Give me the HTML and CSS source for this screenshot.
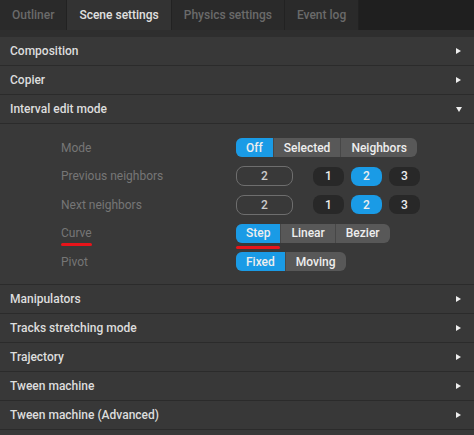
FILE: index.html
```html
<!DOCTYPE html>
<html lang="en">
<head>
    <meta charset="UTF-8">
    <meta name="viewport" content="width=device-width, initial-scale=1.0">
    <title>Scene settings</title>
    <link rel="stylesheet" href="styles.css">
</head>
<body>
    <div class="tabs">
        <div class="tab">Outliner</div>
        <div class="tab active">Scene settings</div>
        <div class="tab">Physics settings</div>
        <div class="tab">Event log</div>
    </div>
    <div class="strip"></div>

    <div class="section"><span>Composition</span><i class="arrow"></i></div>
    <div class="section"><span>Copier</span><i class="arrow"></i></div>
    <div class="section"><span>Interval edit mode</span><i class="arrow open"></i></div>

    <div class="panel">
        <div class="label">Mode</div>
        <div class="seg">
            <span class="on">Off</span><span>Selected</span><span>Neighbors</span>
        </div>

        <div class="label">Previous neighbors</div>
        <div class="numrow">
            <span class="num">2</span>
            <span class="pill">1</span><span class="pill on">2</span><span class="pill">3</span>
        </div>

        <div class="label">Next neighbors</div>
        <div class="numrow">
            <span class="num">2</span>
            <span class="pill">1</span><span class="pill on">2</span><span class="pill">3</span>
        </div>

        <div class="label marked">Curve</div>
        <div class="seg">
            <span class="on marked">Step</span><span>Linear</span><span>Bezier</span>
        </div>

        <div class="label">Pivot</div>
        <div class="seg">
            <span class="on">Fixed</span><span>Moving</span>
        </div>
    </div>

    <div class="section"><span>Manipulators</span><i class="arrow"></i></div>
    <div class="section"><span>Tracks stretching mode</span><i class="arrow"></i></div>
    <div class="section"><span>Trajectory</span><i class="arrow"></i></div>
    <div class="section"><span>Tween machine</span><i class="arrow"></i></div>
    <div class="section"><span>Tween machine (Advanced)</span><i class="arrow"></i></div>
</body>
</html>
```

FILE: styles.css
```css
body {
    margin: 0;
    background-color: #383838;
    font-family: Roboto, "Liberation Sans", sans-serif;
    font-size: 12px;
    color: #ddd;
}
.tabs {
    display: flex;
    height: 30px;
    background: #1f1f1f;
}
.tab {
    display: flex;
    align-items: center;
    padding: 0 12px;
    background: #2a2a2a;
    color: #6a6a6a;
    font-weight: 500;
    border-right: 1px solid #222;
}
.tab.active {
    background: #333;
    color: #e0e0e0;
}
.strip {
    height: 7px;
    background: #2e2e2e;
}
.section {
    display: flex;
    align-items: center;
    justify-content: space-between;
    height: 28px;
    padding: 0 12px 0 10px;
    border-bottom: 1px solid #2b2b2b;
    font-weight: 500;
}
.arrow {
    width: 0;
    height: 0;
    border-top: 3px solid transparent;
    border-bottom: 3px solid transparent;
    border-left: 5px solid #eee;
    margin-right: 1px;
}
.arrow.open {
    border-left: 3px solid transparent;
    border-right: 3px solid transparent;
    border-top: 5px solid #eee;
    border-bottom: 0;
    margin-right: 0;
}
.panel {
    display: grid;
    grid-template-columns: 175px auto;
    grid-auto-rows: 28.5px;
    align-items: center;
    padding: 9.5px 0 8px 61px;
    border-bottom: 1px solid #2b2b2b;
    background: #393939;
}
.label {
    color: #767676;
    position: relative;
}
.marked::after {
    content: "";
    position: absolute;
    left: 0;
    right: 0;
    bottom: -6px;
    height: 3px;
    border-radius: 2px;
    background: #e8141a;
}
.label.marked::after {
    right: auto;
    width: 31px;
}
.seg {
    display: flex;
    justify-self: start;
    height: 19px;
    border-radius: 6px;
    background: #585858;
    font-weight: 500;
    color: #eee;
}
.seg span {
    display: flex;
    align-items: center;
    padding: 0 10px;
    border-left: 1px solid #474747;
    position: relative;
}
.seg span:first-child {
    border-left: 0;
    border-radius: 6px 0 0 6px;
}
.seg span:last-child {
    border-radius: 0 6px 6px 0;
}
.seg .on {
    background: #1a9be6;
}
.numrow {
    display: flex;
    align-items: center;
    gap: 7px;
    font-weight: 500;
}
.num {
    width: 55px;
    height: 18px;
    display: flex;
    align-items: center;
    justify-content: center;
    border: 1px solid #6e6e6e;
    border-radius: 8px;
    color: #ccc;
    margin-right: 13px;
}
.pill {
    width: 31px;
    height: 19px;
    display: flex;
    align-items: center;
    justify-content: center;
    border-radius: 8px;
    background: #282828;
    color: #eee;
}
.pill.on {
    background: #1a9be6;
}
```
